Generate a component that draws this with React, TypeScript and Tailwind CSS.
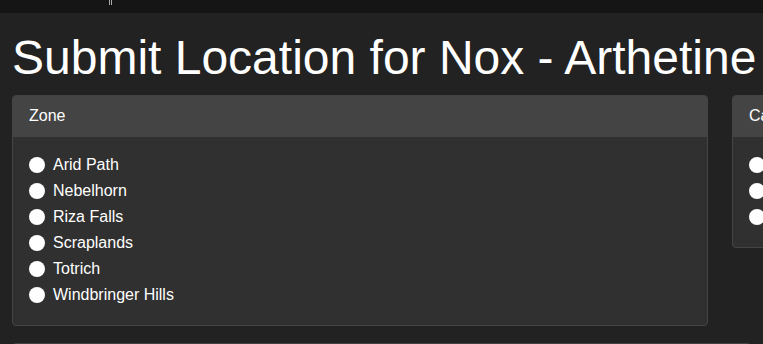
import React from "react"

const zones = ["Arid Path", "Nebelhorn", "Riza Falls", "Scraplands", "Totrich", "Windbringer Hills"]
const cats = ["", "", ""]

function Radio({ label }: { label: string }) {
  return (
    <label className="flex h-[26px] items-center gap-2">
      <span className="h-4 w-4 shrink-0 rounded-full bg-white" />
      <span className="text-[16px] leading-none text-white">{label}</span>
    </label>
  )
}

function Panel({ title, items, className }: { title: string; items: string[]; className: string }) {
  return (
    <div className={`shrink-0 overflow-hidden rounded border border-[#444] bg-[#303030] ${className}`}>
      <div className="h-[41px] bg-[#444] px-4 pt-[8px] text-[16px] leading-[24px] text-white">{title}</div>
      <div className="px-4 pt-[15px] pb-[17px]">
        {items.map((z, i) => (
          <Radio key={i} label={z} />
        ))}
      </div>
    </div>
  )
}

export default function App() {
  return (
    <div className="h-[344px] w-[763px] overflow-hidden bg-[#222]" style={{ fontFamily: '"Liberation Sans", Arial, sans-serif' }}>
      <div className="relative h-[13px] bg-[#151515]">
        <span className="absolute left-[109px] top-0 h-[5px] w-[3px] border-x border-[#aaa]" />
      </div>
      <h1 className="mt-[19px] whitespace-nowrap pl-[12px] text-[48px] leading-[52px] text-white">
        Submit Location for Nox - Arthetine
      </h1>
      <div className="mt-[11px] flex gap-6 px-3">
        <Panel title="Zone" items={zones} className="w-[696px]" />
        <Panel title="Category" items={cats} className="w-[300px] self-start" />
      </div>
      <div className="mx-3 mt-[17px] h-[40px] rounded border border-[#444] bg-[#444]" />
    </div>
  )
}
